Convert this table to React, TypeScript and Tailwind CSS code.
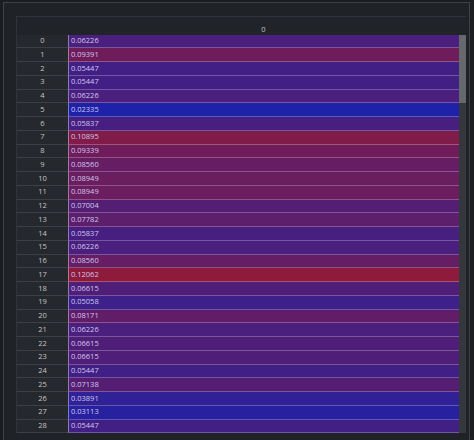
import React from "react";

const values = [
  "0.06226", "0.09391", "0.05447", "0.05447", "0.06226", "0.02335", "0.05837",
  "0.10895", "0.09339", "0.08560", "0.08949", "0.08949", "0.07004", "0.07782",
  "0.05837", "0.06226", "0.08560", "0.12062", "0.06615", "0.05058", "0.08171",
  "0.06226", "0.06615", "0.06615", "0.05447", "0.07138", "0.03891", "0.03113",
  "0.05447",
];

const lo = [30, 34, 168];
const hi = [142, 26, 60];

function cellColor(v: number) {
  const t = Math.min(1, Math.max(0, (v - 0.02335) / (0.12062 - 0.02335)));
  const c = lo.map((a, i) => Math.round(a + (hi[i] - a) * t));
  return `rgb(${c[0]}, ${c[1]}, ${c[2]})`;
}

export default function App() {
  return (
    <div
      className="h-[440px] w-[474px] overflow-hidden bg-[#1b1d21] pl-[3px] pr-[4px] pt-[2px]"
      style={{ fontFamily: '"Open Sans", "Noto Sans", sans-serif' }}
    >
      <div className="h-full border-l border-r border-t border-[#3e4146] bg-[#1f2226] pl-[12px] pt-[13px]">
        <div className="w-[450px] border-l border-t border-[#30333a]">
          <div className="flex h-[17.5px] items-end justify-center bg-[#202328] pb-[1px] text-[7.5px] leading-none text-[#c4c4c8]">
            <span className="ml-[44px]">0</span>
          </div>
          <div className="flex">
            <div className="flex-1">
              {values.map((v, i) => (
                <div key={i} className="flex h-[13.75px] text-[7.5px] leading-none">
                  <div className="flex w-[51px] items-center justify-center border-b border-[#3c3f45] bg-[#25282d] text-[#c6c6c8]">
                    {i}
                  </div>
                  <div
                    className="flex flex-1 items-center border-b border-l border-b-white/25 border-l-white/40 pl-[2px] text-[#cfc8ee]"
                    style={{ backgroundColor: cellColor(parseFloat(v)) }}
                  >
                    {v}
                  </div>
                </div>
              ))}
            </div>
            <div className="w-[7px] bg-[#34373c]">
              <div className="h-[68px] w-full bg-[#65686d]" />
            </div>
          </div>
        </div>
      </div>
    </div>
  );
}
